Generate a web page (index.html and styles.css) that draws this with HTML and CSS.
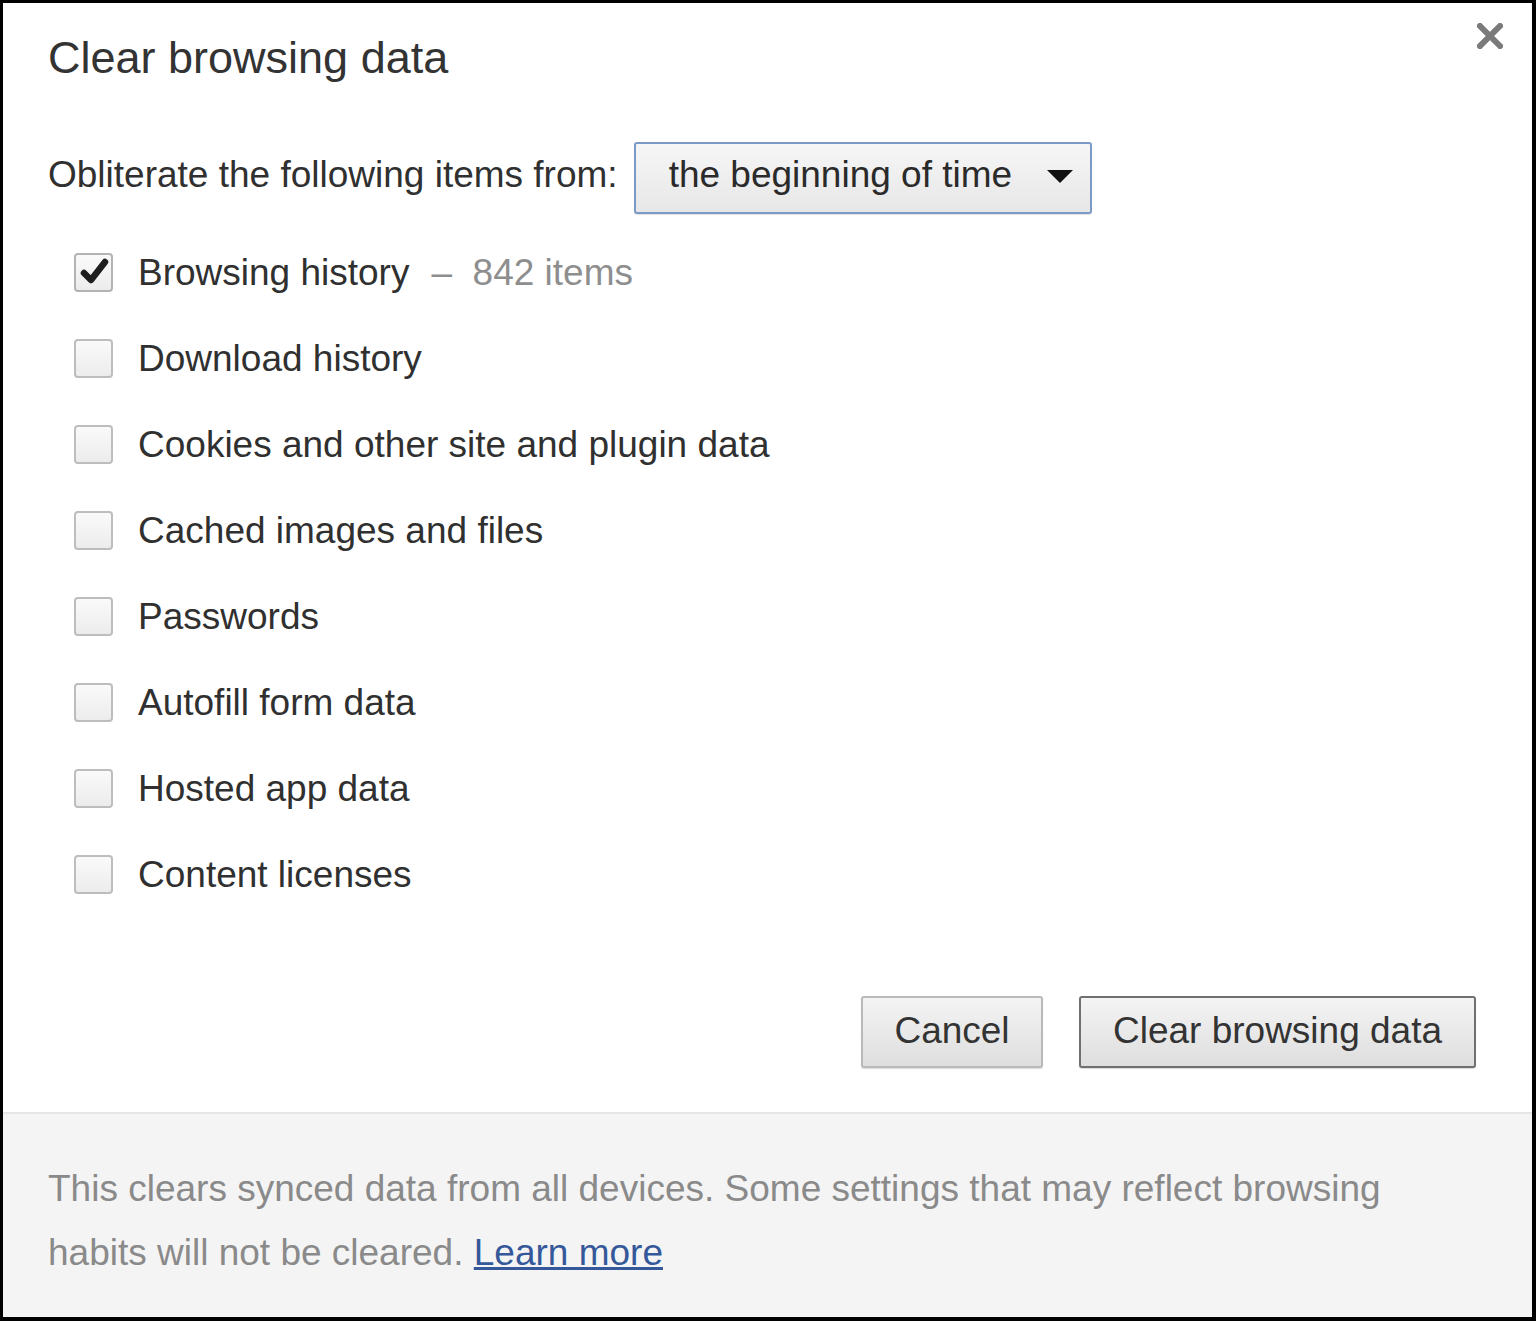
FILE: index.html
```html
<!DOCTYPE html>
<html lang="en">
<head>
<meta charset="utf-8">
<title>Clear browsing data</title>
<link rel="stylesheet" href="styles.css">
</head>
<body>
<div class="dialog">
  <div class="main">
    <h1 class="title">Clear browsing data</h1>
    <button class="close" aria-label="Close">
      <svg width="26" height="26" viewBox="0 0 26 26"><path d="M3 3 L23 23 M23 3 L3 23" stroke="#7a7a7a" stroke-width="6" stroke-linecap="square"/></svg>
    </button>
    <div class="range-row">
      <span class="range-label">Obliterate the following items from:</span>
      <div class="select">
        <span class="select-text">the beginning of time</span>
        <svg class="select-arrow" width="26" height="14" viewBox="0 0 26 14"><path d="M0 0 H26 L13 13 Z" fill="#111"/></svg>
      </div>
    </div>
    <ul class="items">
      <li class="item"><span class="check checked"><svg width="30" height="30" viewBox="0 0 30 30"><path d="M5 17 L12 24 L26 6" fill="none" stroke="#1e1e1e" stroke-width="6.5" stroke-linejoin="round" stroke-linecap="round"/></svg></span><span class="label">Browsing history</span><span class="count">–&nbsp;&nbsp;842 items</span></li>
      <li class="item"><span class="check"></span><span class="label">Download history</span></li>
      <li class="item"><span class="check"></span><span class="label">Cookies and other site and plugin data</span></li>
      <li class="item"><span class="check"></span><span class="label">Cached images and files</span></li>
      <li class="item"><span class="check"></span><span class="label">Passwords</span></li>
      <li class="item"><span class="check"></span><span class="label">Autofill form data</span></li>
      <li class="item"><span class="check"></span><span class="label">Hosted app data</span></li>
      <li class="item"><span class="check"></span><span class="label">Content licenses</span></li>
    </ul>
    <div class="actions">
      <button class="btn btn-cancel">Cancel</button>
      <button class="btn btn-default">Clear browsing data</button>
    </div>
  </div>
  <div class="footer">
    <p class="note">This clears synced data from all devices. Some settings that may reflect browsing habits will not be cleared. <a href="#" class="link">Learn more</a></p>
  </div>
</div>
</body>
</html>
```

FILE: styles.css
```css
* { box-sizing: border-box; }

html, body {
  margin: 0;
  padding: 0;
  background: #000;
}

.dialog {
  width: 1536px;
  height: 1321px;
  border-style: solid;
  border-color: #000;
  border-width: 3px 4px 4px 3px;
  background: #fff;
  display: flex;
  flex-direction: column;
  font-family: "Liberation Sans", Arial, sans-serif;
  color: #303030;
}

.main {
  position: relative;
  padding: 29px 56px 44px 45px;
}

.title {
  margin: 0;
  font-size: 45px;
  line-height: 52px;
  font-weight: normal;
  color: #333;
}

.close {
  position: absolute;
  top: 20px;
  right: 29px;
  width: 26px;
  height: 26px;
  padding: 0;
  border: 0;
  background: none;
}
.close svg { display: block; }

.range-row {
  margin-top: 58px;
  display: flex;
  align-items: baseline;
  gap: 16px;
  font-size: 37px;
}

.range-label {
  line-height: 41px;
}

.select {
  width: 458px;
  height: 72px;
  display: flex;
  align-items: center;
  justify-content: space-between;
  padding: 0 17px 8px 33px;
  border: 2px solid #7d9ac6;
  border-radius: 3px;
  background: linear-gradient(#f6f6f6, #e7e7e7);
  box-shadow: 0 1px 1px rgba(0,0,0,0.12);
  line-height: 41px;
  color: #2a2a2a;
  white-space: nowrap;
}
.select-arrow { margin-top: 6px; }

.items {
  list-style: none;
  margin: 15px 0 0;
  padding: 0 0 0 26px;
}

.item {
  height: 86px;
  display: flex;
  align-items: center;
  font-size: 37px;
  line-height: 41px;
  white-space: nowrap;
}

.check {
  width: 39px;
  height: 39px;
  flex: none;
  margin-right: 25px;
  border: 2px solid #bdbdbd;
  border-radius: 4px;
  background: linear-gradient(#fafafa, #ececec);
  display: flex;
  align-items: center;
  justify-content: center;
}
.check.checked { border-color: #b3b3b3; }
.check svg { display: block; margin-top: -2px; }

.label { color: #303030; }

.count {
  margin-left: 22px;
  color: #8e8e8e;
}

.actions {
  margin-top: 79px;
  display: flex;
  justify-content: flex-end;
  gap: 36px;
}

.btn {
  height: 72px;
  padding: 0 20px 4px;
  border: 2px solid #b9b9b9;
  border-radius: 3px;
  background: linear-gradient(#f4f4f4, #dedede);
  box-shadow: 0 1px 1px rgba(0,0,0,0.15);
  font-family: "Liberation Sans", Arial, sans-serif;
  font-size: 37px;
  line-height: 41px;
  color: #333;
  white-space: nowrap;
}
.btn-cancel { width: 182px; }
.btn-default {
  width: 397px;
  border-color: #707070;
}

.footer {
  flex: 1;
  border-top: 2px solid #e6e6e6;
  background: #f4f4f4;
  padding: 43px 56px 0 45px;
}

.note {
  margin: 0;
  font-size: 37px;
  line-height: 64px;
  color: #8a8a8a;
  max-width: 1370px;
}

.link {
  color: #34589a;
  text-decoration: underline;
}
```
